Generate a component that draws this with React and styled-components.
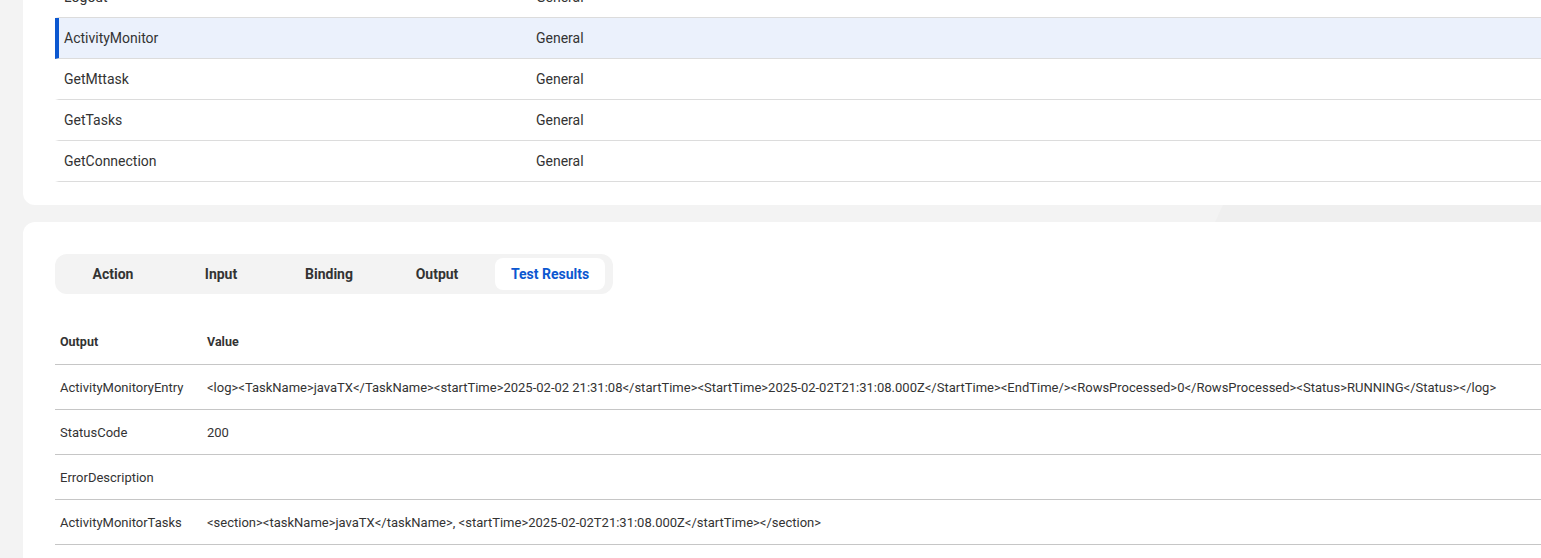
import React from "react";
import styled, { createGlobalStyle } from "styled-components";

const Global = createGlobalStyle`
  html, body { margin: 0; padding: 0; background: #f3f3f3; overflow: hidden; }
  body { font-family: Roboto, "Noto Sans", "Liberation Sans", sans-serif; color: #333; }
`;

const Page = styled.div`
  width: 1620px;
  padding-left: 23px;
  display: flex;
  flex-direction: column;
  gap: 17px;
`;

const Card = styled.section`
  position: relative;
  background: #fff;
  border-radius: ${(p) => (p.$top ? "0 0 12px 12px" : "12px 12px 0 0")};
  padding: ${(p) => (p.$top ? "0 0 23px 32px" : "32px 0 40px 32px")};
`;

const GapShade = styled.div`
  position: absolute;
  top: -17px;
  left: 1192px;
  right: 0;
  height: 17px;
  background: #efefef;
  clip-path: polygon(8px 0, 100% 0, 100% 100%, 0 100%);
`;

const ListTable = styled.div`
  margin-top: -23px;
  display: flex;
  flex-direction: column;
`;

const ListRow = styled.div`
  display: grid;
  grid-template-columns: 472px 1fr;
  align-items: center;
  height: 40px;
  padding-left: 5px;
  border-left: 4px solid ${(p) => (p.$selected ? "#0b57d0" : "transparent")};
  background: ${(p) => (p.$selected ? "#ebf1fc" : "#fff")};
  border-bottom: 1px solid #dcdcdc;
  font-size: 14px;
  color: #333;
`;

const TabBar = styled.div`
  display: inline-flex;
  align-self: flex-start;
  background: #f3f3f3;
  border-radius: 12px;
  padding: 4px 8px 4px 4px;
`;

const Tab = styled.div`
  height: 32px;
  display: flex;
  align-items: center;
  justify-content: center;
  box-sizing: border-box;
  font-size: 14px;
  font-weight: 700;
  color: ${(p) => (p.$active ? "#0b57d0" : "#333")};
  background: ${(p) => (p.$active ? "#fff" : "transparent")};
  border-radius: 8px;
  ${(p) =>
    p.$active
      ? "padding: 0 16px; margin-left: 4px;"
      : "width: 108px;"}
`;

const Body = styled.div`
  display: flex;
  flex-direction: column;
`;

const ResultTable = styled.div`
  margin-top: 25px;
  display: flex;
  flex-direction: column;
`;

const ResultRow = styled.div`
  display: grid;
  grid-template-columns: 147px 1fr;
  align-items: center;
  height: ${(p) => (p.$head ? "45px" : "44px")};
  padding-left: 5px;
  border-bottom: 1px solid #c6c6c6;
  font-size: ${(p) => (p.$head ? "12.5px" : "13px")};
  font-weight: ${(p) => (p.$head ? 700 : 400)};
  color: #333;
  white-space: nowrap;
`;

const topRows = [
  ["Logout", "General"],
  ["ActivityMonitor", "General", true],
  ["GetMttask", "General"],
  ["GetTasks", "General"],
  ["GetConnection", "General"],
];

const tabs = ["Action", "Input", "Binding", "Output", "Test Results"];

const results = [
  [
    "ActivityMonitoryEntry",
    "<log><TaskName>javaTX</TaskName><startTime>2025-02-02 21:31:08</startTime><StartTime>2025-02-02T21:31:08.000Z</StartTime><EndTime/><RowsProcessed>0</RowsProcessed><Status>RUNNING</Status></log>",
  ],
  ["StatusCode", "200"],
  ["ErrorDescription", ""],
  [
    "ActivityMonitorTasks",
    "<section><taskName>javaTX</taskName>, <startTime>2025-02-02T21:31:08.000Z</startTime></section>",
  ],
];

export default function App() {
  return (
    <>
      <Global />
      <Page>
        <Card $top>
          <ListTable>
            {topRows.map(([name, cat, sel]) => (
              <ListRow key={name} $selected={sel}>
                <span>{name}</span>
                <span>{cat}</span>
              </ListRow>
            ))}
          </ListTable>
        </Card>
        <Card>
          <GapShade />
          <Body>
            <TabBar>
              {tabs.map((t) => (
                <Tab key={t} $active={t === "Test Results"}>
                  {t}
                </Tab>
              ))}
            </TabBar>
            <ResultTable>
              <ResultRow $head>
                <span>Output</span>
                <span>Value</span>
              </ResultRow>
              {results.map(([k, v]) => (
                <ResultRow key={k}>
                  <span>{k}</span>
                  <span>{v}</span>
                </ResultRow>
              ))}
            </ResultTable>
          </Body>
        </Card>
      </Page>
    </>
  );
}
